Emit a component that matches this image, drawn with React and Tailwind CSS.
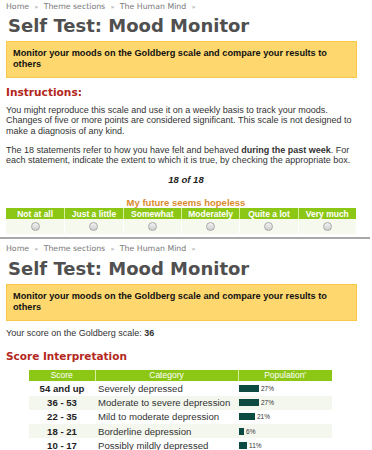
import React from 'react';

const options = ['Not at all', 'Just a little', 'Somewhat', 'Moderately', 'Quite a lot', 'Very much'];

const scores = [
  { range: '54 and up', label: 'Severely depressed', pct: 27 },
  { range: '36 - 53', label: 'Moderate to severe depression', pct: 27 },
  { range: '22 - 35', label: 'Mild to moderate depression', pct: 21 },
  { range: '18 - 21', label: 'Borderline depression', pct: 6 },
  { range: '10 - 17', label: 'Possibly mildly depressed', pct: 11 },
];

const Breadcrumb = () => (
  <div className="text-[7.8px] text-[#777] pl-[6px] h-[14px] leading-[14px] font-['DejaVu_Sans',sans-serif]">
    Home <span className="text-[6px] px-[3px]">»</span> Theme sections <span className="text-[6px] px-[3px]">»</span> The Human Mind <span className="text-[6px] px-[3px]">»</span>
  </div>
);

const Header = () => (
  <>
    <h1 className="pl-[8px] text-[18px] leading-[24px] font-bold text-[#505050] font-['DejaVu_Sans',sans-serif]">
      Self Test: Mood Monitor
    </h1>
    <div className="mx-[6px] mt-[3px] w-[351px] bg-[#fed86f] border border-[#f7c84a] px-[6px] pt-[6px] pb-[7px] text-[9.2px] leading-[11px] font-bold text-[#111] font-['Liberation_Sans',Arial,sans-serif]">
      Monitor your moods on the Goldberg scale and compare your results to others
    </div>
  </>
);

export default function App() {
  return (
    <div className="w-[372px] h-[450px] overflow-hidden bg-white font-['Liberation_Sans',Arial,sans-serif]">
      <Breadcrumb />
      <Header />

      <h2 className="pl-[6px] mt-[7px] text-[10.6px] leading-[14px] font-bold text-[#b3271c] font-['DejaVu_Sans',sans-serif]">Instructions:</h2>
      <p className="px-[6px] mt-[6px] text-[9px] leading-[10.3px] text-[#333]">
        You might reproduce this scale and use it on a weekly basis to track your moods. Changes of five or more points are considered significant. This scale is not designed to make a diagnosis of any kind.
      </p>
      <p className="px-[6px] mt-[9px] text-[9px] leading-[10.3px] text-[#333]">
        The 18 statements refer to how you have felt and behaved <b>during the past week</b>. For each statement, indicate the extent to which it is true, by checking the appropriate box.
      </p>
      <div className="mt-[9px] text-center text-[9.5px] leading-[12px] font-bold italic text-[#222]">18 of 18</div>
      <div className="mt-[11px] text-center text-[9.5px] leading-[11px] font-bold text-[#d98a2d]">My future seems hopeless</div>
      <div className="ml-[6px] w-[350px] grid grid-cols-6">
        {options.map((o, i) => (
          <div key={o} className={`bg-[#8dc716] text-white text-[8.5px] leading-[10px] font-bold text-center py-[0.5px] ${i > 0 ? 'border-l border-[#d7ee9f]' : ''}`}>{o}</div>
        ))}
        {options.map((o, i) => (
          <div key={o + 'r'} className={`bg-[#f6f9ee] h-[15px] flex items-center justify-center ${i > 0 ? 'border-l border-white' : ''}`}>
            <span className="w-[9px] h-[9px] rounded-full border border-[#a9a9a9] bg-gradient-to-b from-[#f2f2f2] to-[#cfcfcf]" />
          </div>
        ))}
      </div>
      <div className="mt-[3px] h-[2px] w-[370px] bg-[#a8a8a8]" />

      <div className="mt-[3px]"><Breadcrumb /></div>
      <div className="mt-[1px]"><Header /></div>

      <div className="pl-[6px] mt-[7px] text-[9px] leading-[11px] text-[#333]">Your score on the Goldberg scale: <b>36</b></div>

      <h2 className="pl-[6px] mt-[10px] text-[10.5px] leading-[14px] font-bold text-[#b3271c] font-['DejaVu_Sans',sans-serif]">Score Interpretation</h2>

      <table className="ml-[29px] mt-[7px] w-[303px] border-collapse">
        <thead>
          <tr className="bg-[#8dc716] text-white text-[8.5px] leading-[11px]">
            <th className="w-[66px] font-normal border-r border-[#d7ee9f]">Score</th>
            <th className="w-[143px] font-normal border-r border-[#d7ee9f]">Category</th>
            <th className="font-normal">Population<sup className="text-[5px]">*</sup></th>
          </tr>
        </thead>
        <tbody>
          {scores.map((s, i) => (
            <tr key={s.range} className={`h-[14.2px] text-[9.6px] leading-[11px] whitespace-nowrap ${i % 2 === 1 ? 'bg-[#f4f7ee]' : ''}`}>
              <td className="text-center font-bold text-[#222]">{s.range}</td>
              <td className="pl-[3px] text-[#333]">{s.label}</td>
              <td className="pl-[1px]">
                <div className="flex items-center gap-[2px]">
                  <span className="h-[7px] bg-[#0d4a42]" style={{ width: Math.round(s.pct * 0.75) + 'px' }} />
                  <span className="text-[6.5px] text-[#333]">{s.pct}%</span>
                </div>
              </td>
            </tr>
          ))}
        </tbody>
      </table>
    </div>
  );
}
